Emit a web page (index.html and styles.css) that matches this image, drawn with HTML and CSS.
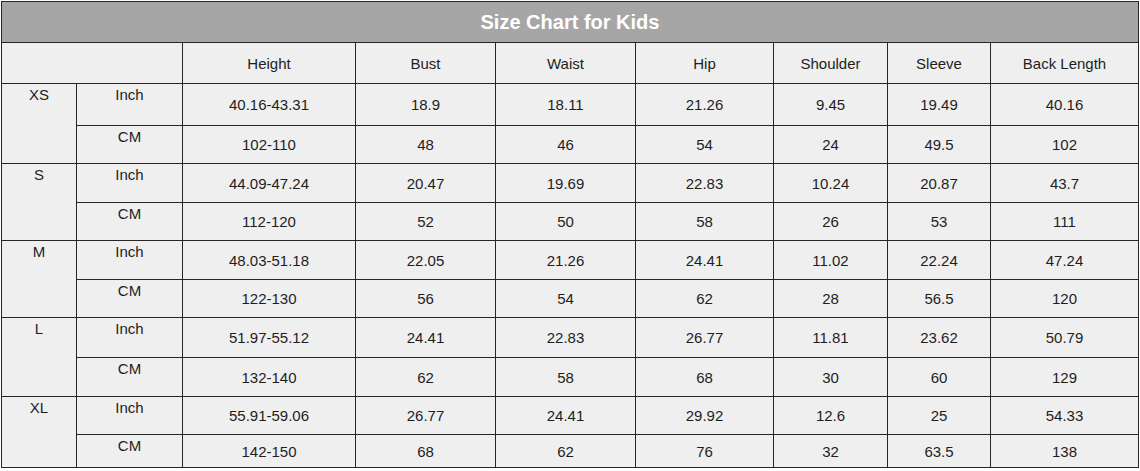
FILE: index.html
```html
<!DOCTYPE html>
<html>
<head>
<meta charset="utf-8">
<link rel="stylesheet" href="styles.css">
</head>
<body>
<div class="wrap">
<div class="chart">
  <div class="title">Size Chart for Kids</div>
  <div class="cell head corner"></div>
  <div class="cell head">Height</div>
  <div class="cell head">Bust</div>
  <div class="cell head">Waist</div>
  <div class="cell head">Hip</div>
  <div class="cell head">Shoulder</div>
  <div class="cell head">Sleeve</div>
  <div class="cell head">Back Length</div>

  <div class="cell size">XS</div>
  <div class="cell unit">Inch</div>
  <div class="cell">40.16-43.31</div><div class="cell">18.9</div><div class="cell">18.11</div><div class="cell">21.26</div><div class="cell">9.45</div><div class="cell">19.49</div><div class="cell">40.16</div>
  <div class="cell unit">CM</div>
  <div class="cell">102-110</div><div class="cell">48</div><div class="cell">46</div><div class="cell">54</div><div class="cell">24</div><div class="cell">49.5</div><div class="cell">102</div>

  <div class="cell size">S</div>
  <div class="cell unit">Inch</div>
  <div class="cell">44.09-47.24</div><div class="cell">20.47</div><div class="cell">19.69</div><div class="cell">22.83</div><div class="cell">10.24</div><div class="cell">20.87</div><div class="cell">43.7</div>
  <div class="cell unit">CM</div>
  <div class="cell">112-120</div><div class="cell">52</div><div class="cell">50</div><div class="cell">58</div><div class="cell">26</div><div class="cell">53</div><div class="cell">111</div>

  <div class="cell size">M</div>
  <div class="cell unit">Inch</div>
  <div class="cell">48.03-51.18</div><div class="cell">22.05</div><div class="cell">21.26</div><div class="cell">24.41</div><div class="cell">11.02</div><div class="cell">22.24</div><div class="cell">47.24</div>
  <div class="cell unit">CM</div>
  <div class="cell">122-130</div><div class="cell">56</div><div class="cell">54</div><div class="cell">62</div><div class="cell">28</div><div class="cell">56.5</div><div class="cell">120</div>

  <div class="cell size">L</div>
  <div class="cell unit">Inch</div>
  <div class="cell">51.97-55.12</div><div class="cell">24.41</div><div class="cell">22.83</div><div class="cell">26.77</div><div class="cell">11.81</div><div class="cell">23.62</div><div class="cell">50.79</div>
  <div class="cell unit">CM</div>
  <div class="cell">132-140</div><div class="cell">62</div><div class="cell">58</div><div class="cell">68</div><div class="cell">30</div><div class="cell">60</div><div class="cell">129</div>

  <div class="cell size">XL</div>
  <div class="cell unit">Inch</div>
  <div class="cell">55.91-59.06</div><div class="cell">26.77</div><div class="cell">24.41</div><div class="cell">29.92</div><div class="cell">12.6</div><div class="cell">25</div><div class="cell">54.33</div>
  <div class="cell unit">CM</div>
  <div class="cell">142-150</div><div class="cell">68</div><div class="cell">62</div><div class="cell">76</div><div class="cell">32</div><div class="cell">63.5</div><div class="cell">138</div>
</div>
</div>
</body>
</html>
```

FILE: styles.css
```css
html, body {
  margin: 0;
  padding: 0;
  background: #ffffff;
}

.wrap {
  padding: 1px 0 0 1px;
}

.chart {
  display: grid;
  width: 1138px;
  box-sizing: border-box;
  grid-template-columns: 74px 105px 172px 139px 139px 137px 113px 102px 147px;
  grid-template-rows: 40px 40px 41px 37px 38px 37px 38px 37px 39px 38px 37px 32px;
  gap: 1px;
  padding: 1px;
  background: #262626;
  font-family: "Liberation Sans", Arial, sans-serif;
  font-size: 15px;
  color: #1e1e1e;
}

.title {
  grid-column: 1 / -1;
  background: #a6a6a6;
  color: #ffffff;
  font-weight: bold;
  font-size: 20px;
  display: flex;
  align-items: center;
  justify-content: center;
}

.cell {
  background: #efefef;
  display: flex;
  align-items: center;
  justify-content: center;
  line-height: 17px;
}

.corner {
  grid-column: span 2;
}

.size {
  grid-row: span 2;
  align-items: flex-start;
  padding-top: 2px;
}

.unit {
  align-items: flex-start;
  padding-top: 2px;
}
```
